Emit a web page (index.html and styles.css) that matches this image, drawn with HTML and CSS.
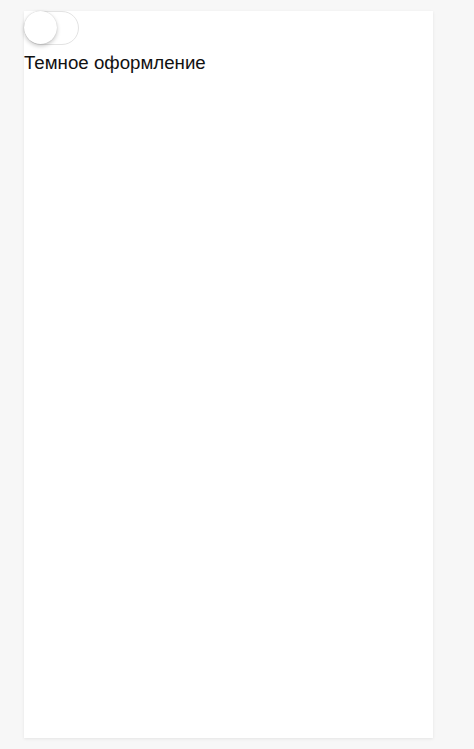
FILE: index.html
```html
<!DOCTYPE html>
<html lang="ru">
<head>
<meta charset="utf-8">
<link rel="stylesheet" href="styles.css">
</head>
<body>
<div class="page">
  <div class="card">
    <label class="switch">
      <span class="knob"></span>
    </label>
    <div class="label">Темное оформление</div>
  </div>
</div>
</body>
</html>
```
FILE: styles.css
```css
html, body {
  margin: 0;
  padding: 0;
  background: #f7f7f7;
  font-family: "Liberation Sans", Arial, sans-serif;
}
.page {
  padding: 11px 0 0 24px;
  height: 749px;
  box-sizing: border-box;
}
.card {
  width: 409px;
  height: 727px;
  background: #fff;
  box-shadow: 0 1px 3px rgba(0,0,0,0.08);
}
.switch {
  display: block;
  width: 55px;
  height: 34px;
  box-sizing: border-box;
  border: 1.5px solid #e3e3e3;
  border-radius: 17px;
  background: #fff;
  position: relative;
}
.knob {
  position: absolute;
  left: -1px;
  top: -1px;
  width: 33px;
  height: 33px;
  border-radius: 50%;
  background: #fff;
  box-shadow: 0 2px 4px rgba(0,0,0,0.22), 0 0 1px rgba(0,0,0,0.2);
}
.label {
  font-size: 18.7px;
  line-height: 22px;
  color: #111;
  margin-top: 7px;
}
```
